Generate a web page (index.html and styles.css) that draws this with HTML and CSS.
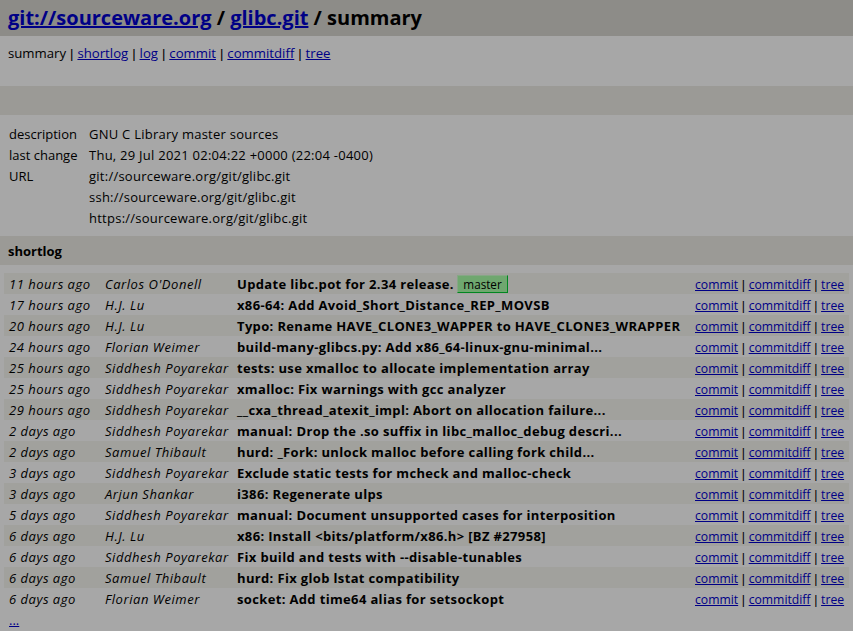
FILE: index.html
```html
<!DOCTYPE html>
<html>
<head>
<meta charset="utf-8">
<title>sourceware.org Git - glibc.git/summary</title>
<link rel="stylesheet" href="styles.css">
</head>
<body>
<div class="page-header">
  <a href="#">git://sourceware.org</a> / <a href="#">glibc.git</a> / summary
</div>
<div class="page-nav">
  summary <span class="sep">|</span> <a href="#">shortlog</a> <span class="sep">|</span> <a href="#">log</a> <span class="sep">|</span> <a href="#">commit</a> <span class="sep">|</span> <a href="#">commitdiff</a> <span class="sep">|</span> <a href="#">tree</a><br>&nbsp;
</div>
<div class="title">&nbsp;</div>
<table class="info">
  <tr><td class="key">description</td><td class="val">GNU C Library master sources</td></tr>
  <tr><td class="key">last change</td><td class="val">Thu, 29 Jul 2021 02:04:22 +0000 (22:04 -0400)</td></tr>
  <tr><td class="key">URL</td><td class="val">git://sourceware.org/git/glibc.git</td></tr>
  <tr><td class="key"></td><td class="val">ssh://sourceware.org/git/glibc.git</td></tr>
  <tr><td class="key"></td><td class="val">https://sourceware.org/git/glibc.git</td></tr>
</table>
<div class="title"><a class="title-link" href="#">shortlog</a></div>
<table class="shortlog">
  <colgroup><col class="c-age"><col class="c-author"><col class="c-subject"><col class="c-link"></colgroup>
  <tr class="dark"><td class="age">11 hours ago</td><td class="author">Carlos O'Donell</td><td class="subject"><a href="#">Update libc.pot for 2.34 release.</a> <span class="head">master</span></td><td class="link"><a href="#">commit</a> <span class="sep">|</span> <a href="#">commitdiff</a> <span class="sep">|</span> <a href="#">tree</a></td></tr>
  <tr class="light"><td class="age">17 hours ago</td><td class="author">H.J. Lu</td><td class="subject"><a href="#">x86-64: Add Avoid_Short_Distance_REP_MOVSB</a></td><td class="link"><a href="#">commit</a> <span class="sep">|</span> <a href="#">commitdiff</a> <span class="sep">|</span> <a href="#">tree</a></td></tr>
  <tr class="dark"><td class="age">20 hours ago</td><td class="author">H.J. Lu</td><td class="subject"><a href="#">Typo: Rename HAVE_CLONE3_WAPPER to HAVE_CLONE3_WRAPPER</a></td><td class="link"><a href="#">commit</a> <span class="sep">|</span> <a href="#">commitdiff</a> <span class="sep">|</span> <a href="#">tree</a></td></tr>
  <tr class="light"><td class="age">24 hours ago</td><td class="author">Florian Weimer</td><td class="subject"><a href="#">build-many-glibcs.py: Add x86_64-linux-gnu-minimal...</a></td><td class="link"><a href="#">commit</a> <span class="sep">|</span> <a href="#">commitdiff</a> <span class="sep">|</span> <a href="#">tree</a></td></tr>
  <tr class="dark"><td class="age">25 hours ago</td><td class="author">Siddhesh Poyarekar</td><td class="subject"><a href="#">tests: use xmalloc to allocate implementation array</a></td><td class="link"><a href="#">commit</a> <span class="sep">|</span> <a href="#">commitdiff</a> <span class="sep">|</span> <a href="#">tree</a></td></tr>
  <tr class="light"><td class="age">25 hours ago</td><td class="author">Siddhesh Poyarekar</td><td class="subject"><a href="#">xmalloc: Fix warnings with gcc analyzer</a></td><td class="link"><a href="#">commit</a> <span class="sep">|</span> <a href="#">commitdiff</a> <span class="sep">|</span> <a href="#">tree</a></td></tr>
  <tr class="dark"><td class="age">29 hours ago</td><td class="author">Siddhesh Poyarekar</td><td class="subject"><a href="#">__cxa_thread_atexit_impl: Abort on allocation failure...</a></td><td class="link"><a href="#">commit</a> <span class="sep">|</span> <a href="#">commitdiff</a> <span class="sep">|</span> <a href="#">tree</a></td></tr>
  <tr class="light"><td class="age">2 days ago</td><td class="author">Siddhesh Poyarekar</td><td class="subject"><a href="#">manual: Drop the .so suffix in libc_malloc_debug descri...</a></td><td class="link"><a href="#">commit</a> <span class="sep">|</span> <a href="#">commitdiff</a> <span class="sep">|</span> <a href="#">tree</a></td></tr>
  <tr class="dark"><td class="age">2 days ago</td><td class="author">Samuel Thibault</td><td class="subject"><a href="#">hurd: _Fork: unlock malloc before calling fork child...</a></td><td class="link"><a href="#">commit</a> <span class="sep">|</span> <a href="#">commitdiff</a> <span class="sep">|</span> <a href="#">tree</a></td></tr>
  <tr class="light"><td class="age">3 days ago</td><td class="author">Siddhesh Poyarekar</td><td class="subject"><a href="#">Exclude static tests for mcheck and malloc-check</a></td><td class="link"><a href="#">commit</a> <span class="sep">|</span> <a href="#">commitdiff</a> <span class="sep">|</span> <a href="#">tree</a></td></tr>
  <tr class="dark"><td class="age">3 days ago</td><td class="author">Arjun Shankar</td><td class="subject"><a href="#">i386: Regenerate ulps</a></td><td class="link"><a href="#">commit</a> <span class="sep">|</span> <a href="#">commitdiff</a> <span class="sep">|</span> <a href="#">tree</a></td></tr>
  <tr class="light"><td class="age">5 days ago</td><td class="author">Siddhesh Poyarekar</td><td class="subject"><a href="#">manual: Document unsupported cases for interposition</a></td><td class="link"><a href="#">commit</a> <span class="sep">|</span> <a href="#">commitdiff</a> <span class="sep">|</span> <a href="#">tree</a></td></tr>
  <tr class="dark"><td class="age">6 days ago</td><td class="author">H.J. Lu</td><td class="subject"><a href="#">x86: Install &lt;bits/platform/x86.h&gt; [BZ #27958]</a></td><td class="link"><a href="#">commit</a> <span class="sep">|</span> <a href="#">commitdiff</a> <span class="sep">|</span> <a href="#">tree</a></td></tr>
  <tr class="light"><td class="age">6 days ago</td><td class="author">Siddhesh Poyarekar</td><td class="subject"><a href="#">Fix build and tests with --disable-tunables</a></td><td class="link"><a href="#">commit</a> <span class="sep">|</span> <a href="#">commitdiff</a> <span class="sep">|</span> <a href="#">tree</a></td></tr>
  <tr class="dark"><td class="age">6 days ago</td><td class="author">Samuel Thibault</td><td class="subject"><a href="#">hurd: Fix glob lstat compatibility</a></td><td class="link"><a href="#">commit</a> <span class="sep">|</span> <a href="#">commitdiff</a> <span class="sep">|</span> <a href="#">tree</a></td></tr>
  <tr class="light"><td class="age">6 days ago</td><td class="author">Florian Weimer</td><td class="subject"><a href="#">socket: Add time64 alias for setsockopt</a></td><td class="link"><a href="#">commit</a> <span class="sep">|</span> <a href="#">commitdiff</a> <span class="sep">|</span> <a href="#">tree</a></td></tr>
  <tr class="light"><td colspan="4"><a href="#">...</a></td></tr>
</table>
</body>
</html>
```
FILE: styles.css
```css
html, body {
  margin: 0;
  padding: 0;
  background: #a7a7a7;
}
body {
  font-family: "Open Sans", "Noto Sans", sans-serif;
  font-size: 13px;
  line-height: 17px;
  color: #000;
}
a {
  color: #000086;
  text-decoration: underline;
}
.sep {
  font-family: "Liberation Sans", sans-serif;
  line-height: 0;
  padding: 0 0.5px;
}
.page-header {
  height: 20px;
  padding: 8px;
  background: #8d8c88;
  font-size: 20px;
  line-height: 20px;
  font-weight: bold;
  white-space: nowrap;
}
.page-nav {
  padding: 9px 8px 7px;
  font-size: 13.2px;
}
.title {
  padding: 7px 8px 5px;
  background: #9b9a96;
  font-weight: bold;
}
.title-link {
  color: #000;
  text-decoration: none;
}
table {
  border-spacing: 0;
  padding: 8px 4px;
}
td {
  padding: 3px 5px 1px;
  vertical-align: top;
  white-space: nowrap;
}
.info td.key {
  width: 70px;
}
.info td.val {
  letter-spacing: 0.25px;
}
.shortlog {
  width: 100%;
  box-sizing: border-box;
  table-layout: fixed;
}
.shortlog col.c-age {
  width: 96px;
}
.shortlog col.c-author {
  width: 132px;
}
.shortlog col.c-link {
  width: 159px;
}
.shortlog tr.dark {
  background: #a1a19d;
}
.shortlog td.age {
  font-style: italic;
  letter-spacing: 0.5px;
}
.shortlog td.author {
  font-style: italic;
  letter-spacing: 0.55px;
}
.shortlog td.subject {
  overflow: hidden;
}
.shortlog td.subject a {
  color: #000;
  text-decoration: none;
  font-weight: bold;
  letter-spacing: 0.35px;
}
.shortlog td.link {
  text-align: right;
  font-size: 12.2px;
}
.head {
  display: inline-block;
  padding: 0 5px;
  margin: -1px 0;
  font-size: 11.7px;
  line-height: 16px;
  font-weight: normal;
  background: #6fa76f;
  border: 1px solid;
  border-color: #86a786 #008621 #008621 #86a786;
  vertical-align: top;
}
```
